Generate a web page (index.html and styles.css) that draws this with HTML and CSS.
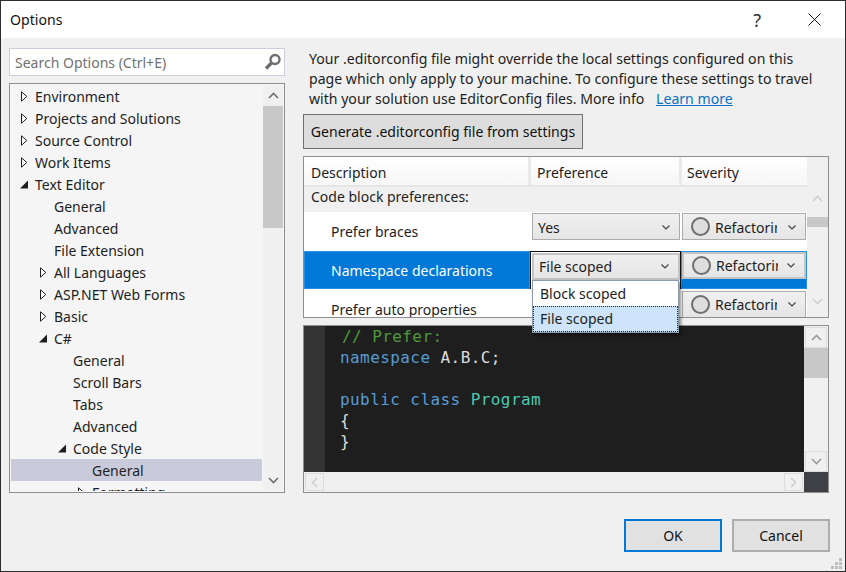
FILE: index.html
```html
<!DOCTYPE html>
<html lang="en">
<head>
<meta charset="utf-8">
<title>Options</title>
<link rel="stylesheet" href="styles.css">
</head>
<body>
<svg class="defs" width="0" height="0">
  <defs>
    <symbol id="open" viewBox="0 0 8 9"><path d="M0 8.5 8 8.5 8 .5Z" fill="#1e1e1e"/></symbol>
    <symbol id="closed" viewBox="0 0 8 11"><path d="M1.5 .8 6.8 5.5 1.5 10.2Z" fill="#fff" stroke="#1e1e1e"/></symbol>
    <symbol id="up" viewBox="0 0 11 7"><path d="M1 6 5.5 1.5 10 6" fill="none" stroke="currentColor" stroke-width="1.6"/></symbol>
    <symbol id="down" viewBox="0 0 11 7"><path d="M1 1 5.5 5.5 10 1" fill="none" stroke="currentColor" stroke-width="1.6"/></symbol>
    <symbol id="chev" viewBox="0 0 8 5"><path d="M.5 .5 4 4 7.5 .5" fill="none" stroke="#444" stroke-width="1.2"/></symbol>
  </defs>
</svg>
<div class="window">
  <header class="titlebar">
    <span class="title">Options</span>
    <span class="help">?</span>
    <svg class="close" width="13" height="13" viewBox="0 0 13 13"><path d="M.5 .5 12.5 12.5M12.5 .5 .5 12.5" stroke="#111" fill="none"/></svg>
  </header>
  <main class="main">
    <section class="left">
      <div class="search">
        <span class="search-text">Search Options (Ctrl+E)</span>
        <svg width="18" height="18" viewBox="0 0 18 18"><circle cx="11" cy="6.5" r="4.5" fill="none" stroke="#6f6f6f" stroke-width="2.4"/><path d="M7.5 10 2 15.5" stroke="#6f6f6f" stroke-width="3.4"/></svg>
      </div>
      <div class="tree">
        <div class="tree-list">
          <div class="node l0"><svg class="tw-c"><use href="#closed"/></svg><span>Environment</span></div>
          <div class="node l0"><svg class="tw-c"><use href="#closed"/></svg><span>Projects and Solutions</span></div>
          <div class="node l0"><svg class="tw-c"><use href="#closed"/></svg><span>Source Control</span></div>
          <div class="node l0"><svg class="tw-c"><use href="#closed"/></svg><span>Work Items</span></div>
          <div class="node l0"><svg class="tw-o"><use href="#open"/></svg><span>Text Editor</span></div>
          <div class="node l1 leaf"><span>General</span></div>
          <div class="node l1 leaf"><span>Advanced</span></div>
          <div class="node l1 leaf"><span>File Extension</span></div>
          <div class="node l1"><svg class="tw-c"><use href="#closed"/></svg><span>All Languages</span></div>
          <div class="node l1"><svg class="tw-c"><use href="#closed"/></svg><span>ASP.NET Web Forms</span></div>
          <div class="node l1"><svg class="tw-c"><use href="#closed"/></svg><span>Basic</span></div>
          <div class="node l1"><svg class="tw-o"><use href="#open"/></svg><span>C#</span></div>
          <div class="node l2 leaf"><span>General</span></div>
          <div class="node l2 leaf"><span>Scroll Bars</span></div>
          <div class="node l2 leaf"><span>Tabs</span></div>
          <div class="node l2 leaf"><span>Advanced</span></div>
          <div class="node l2"><svg class="tw-o"><use href="#open"/></svg><span>Code Style</span></div>
          <div class="node l3 leaf selected"><span>General</span></div>
          <div class="node l3"><svg class="tw-c"><use href="#closed"/></svg><span>Formatting</span></div>
        </div>
        <div class="tree-scroll">
          <div class="ts-btn"><svg width="11" height="7"><use href="#up"/></svg></div>
          <div class="ts-thumb"></div>
          <div class="ts-track"></div>
          <div class="ts-btn"><svg width="11" height="7"><use href="#down"/></svg></div>
        </div>
      </div>
    </section>
    <section class="right">
      <p class="info">Your .editorconfig file might override the local settings configured on this page which only apply to your machine. To configure these settings to travel with your solution use EditorConfig files. More info <a class="link" href="#">Learn more</a></p>
      <button class="gen">Generate .editorconfig file from settings</button>
      <div class="table">
        <div class="table-main">
          <div class="tr head">
            <div class="th">Description</div>
            <div class="th">Preference</div>
            <div class="th">Severity</div>
          </div>
          <div class="group">Code block preferences:</div>
          <div class="tr row">
            <div class="desc">Prefer braces</div>
            <div class="pref"><div class="combo"><span class="combo-text">Yes</span><svg width="8" height="5"><use href="#chev"/></svg></div></div>
            <div class="sev"><div class="combo sev-combo"><span class="radio"></span><span class="sev-text">Refactoring only</span><svg width="8" height="5"><use href="#chev"/></svg></div></div>
          </div>
          <div class="tr row active">
            <div class="desc">Namespace declarations</div>
            <div class="pref">
              <div class="combo"><span class="combo-text">File scoped</span><svg width="8" height="5"><use href="#chev"/></svg></div>
            </div>
            <div class="sev"><div class="combo sev-combo"><span class="radio"></span><span class="sev-text">Refactoring only</span><svg width="8" height="5"><use href="#chev"/></svg></div></div>
          </div>
          <div class="tr row last">
            <div class="desc">Prefer auto properties</div>
            <div class="pref"></div>
            <div class="sev"><div class="combo sev-combo"><span class="radio"></span><span class="sev-text">Refactoring only</span><svg width="8" height="5"><use href="#chev"/></svg></div></div>
          </div>
        </div>
        <div class="table-scroll">
          <svg width="11" height="7"><use href="#up"/></svg>
          <div class="tbl-thumb"></div>
          <svg width="11" height="7"><use href="#down"/></svg>
        </div>
      </div>
      <div class="dropdown">
        <div class="opt">Block scoped</div>
        <div class="opt current">File scoped</div>
      </div>
      <div class="editor">
        <div class="code-pane">
          <div class="gutter"></div>
          <pre class="code"><span class="comment">// Prefer:</span>
<span class="kw">namespace</span> A.B.C;

<span class="kw">public class</span> <span class="type">Program</span>
{
}</pre>
        </div>
        <div class="ed-v">
          <div class="ed-btn"><svg width="11" height="7"><use href="#up"/></svg></div>
          <div class="ed-thumb"></div>
          <div class="ed-track"></div>
          <div class="ed-btn"><svg width="11" height="7"><use href="#down"/></svg></div>
        </div>
        <div class="ed-h">
          <div class="ed-hbtn"><svg width="7" height="11" viewBox="0 0 7 11"><path d="M6 1 1.5 5.5 6 10" fill="none" stroke="#cfcfcf" stroke-width="1.6"/></svg></div>
          <div class="ed-hbtn"><svg width="7" height="11" viewBox="0 0 7 11"><path d="M1 1 5.5 5.5 1 10" fill="none" stroke="#cfcfcf" stroke-width="1.6"/></svg></div>
        </div>
        <div class="ed-corner"></div>
      </div>
    </section>
  </main>
  <footer class="footer">
    <button class="btn default">OK</button>
    <button class="btn">Cancel</button>
  </footer>
  <svg class="grip" width="12" height="12" viewBox="0 0 12 12"><path d="M8 0h3v3H8zM4 4h3v3H4zM8 4h3v3H8zM0 8h3v3H0zM4 8h3v3H4zM8 8h3v3H8z" fill="#bdbdbd"/></svg>
</div>
</body>
</html>
```
FILE: styles.css
```css
* { box-sizing: border-box; }
html, body { margin: 0; height: 100%; }
body { font-family: "Noto Sans", "Open Sans", sans-serif; font-size: 14px; color: #1e1e1e; overflow: hidden; }
.defs { position: absolute; }
.window { position: relative; width: 846px; height: 572px; border: 1px solid #2d2d2d; background: #f0f0f0; display: flex; flex-direction: column; }

.titlebar { height: 37px; background: #fff; display: flex; align-items: center; padding: 0 24px 0 9px; flex: none; }
.title { font-size: 14.1px; color: #111; flex: 1; }
.help { font-size: 18px; color: #333; margin-right: 47px; }

.main { display: flex; gap: 18px; padding: 10px 16px 0 8px; flex: none; height: 455px; }
.left { width: 276px; flex: none; display: flex; flex-direction: column; gap: 7px; }
.search { height: 28px; background: #fff; border: 1px solid #cccedb; display: flex; align-items: center; justify-content: space-between; padding: 0 2px 0 5px; }
.search-text { color: #717171; }
.tree { height: 410px; border: 1px solid #8e8f91; background: #f5f5f5; display: flex; overflow: hidden; padding: 1px; }
.tree-list { width: 251px; flex: none; overflow: hidden; }
.node { height: 22px; display: flex; align-items: center; white-space: nowrap; }
.node svg { flex: none; margin-right: 7px; }
.tw-c { width: 8px; height: 11px; }
.tw-o { width: 8px; height: 9px; }
.leaf span { margin-left: 15px; }
.l0 { padding-left: 9px; }
.l1 { padding-left: 28px; }
.l2 { padding-left: 47px; }
.l3 { padding-left: 66px; }
.selected { background: #cacbda; }
.tree-scroll { width: 20px; flex: none; margin-left: 1px; display: flex; flex-direction: column; color: #6f6f6f; background: #f0f0f0; }
.ts-btn { height: 21px; flex: none; display: flex; align-items: center; justify-content: center; }
.ts-thumb { height: 122px; flex: none; background: #c8c8c8; }
.ts-track { flex: 1; }

.right { width: 526px; flex: none; position: relative; display: flex; flex-direction: column; }
.info { margin: 0 0 5px; padding: 1px 6px 0; line-height: 20px; height: 61px; font-size: 14.1px; }
.link { color: #0e70c0; margin-left: 8px; }
.gen { align-self: flex-start; width: 280px; height: 35px; background: #dddddd; border: 1px solid #707070; font: inherit; font-size: 14.05px; color: #111; padding: 0; }

.table { margin-top: 7px; height: 162px; border: 1px solid #8e8f91; display: flex; background: #f0f0f0; overflow: hidden; flex: none; }
.table-main { width: 503px; flex: none; overflow: hidden; }
.tr { display: grid; grid-template-columns: 226px 151px 126px; }
.head { height: 30px; background: linear-gradient(#fff, #f6f6f6); border-bottom: 2px solid #e6e6e6; }
.th { padding: 6px 7px 0; line-height: 20px; border-right: 3px solid #e9e9e9; margin-right: -1px; }
.th:last-child { padding-left: 6px; border-right: 0; margin-right: 0; }
.group { height: 25px; line-height: 20px; padding: 0 7px; }
.row { height: 39px; background: #fff; }
.row + .row { height: 38px; }
.desc { padding-left: 27px; padding-top: 10px; line-height: 20px; }
.last .desc { padding-top: 11px; }
.pref { padding: 1px 1px 0 2px; }
.sev { padding: 1px 1px 0 1px; }
.combo { height: 27px; border: 1px solid #acacac; background: linear-gradient(#f0f0f0, #e5e5e5); display: flex; align-items: center; padding: 1px 9px 0 5px; }
.combo svg { flex: none; margin-left: auto; }
.combo-text { flex: 1; }
.radio { width: 19px; height: 19px; flex: none; border-radius: 50%; border: 2px solid #6f6f6f; background: #dedede; margin-left: 3px; margin-top: -1px; }
.sev-text { width: 62px; margin-left: 5px; overflow: hidden; white-space: nowrap; flex: none; }
.active { background: #fff; }
.active .desc { background: #0078d7; color: #fff; border: 1px solid #2a8fe0; padding-left: 26px; padding-top: 9px; }
.active .pref { border: 1px solid #111; border-bottom: 0; padding: 1px 0 0 1px; background: #fff; }
.active .sev { background: #0078d7; border: 1px solid #2a8fe0; padding: 0; }
.active .combo { border: 2px solid #c4c4c4; padding-top: 0; }
.last .sev { padding-top: 2px; }
.last .combo { padding-top: 0; }
.table-scroll { flex: 1; display: flex; flex-direction: column; align-items: center; color: #cfcfcf; padding-top: 38px; }
.tbl-thumb { width: 21px; height: 10px; background: #c8c8c8; margin: 15px 0 71px; }

.dropdown { position: absolute; left: 229px; top: 232px; width: 147px; height: 53px; background: #fff; border: 1px solid #8a9aa8; box-shadow: 2px 2px 3px rgba(0, 0, 0, .45); z-index: 2; }
.opt { height: 25px; line-height: 25px; padding-left: 7px; }
.current { height: 26px; padding-left: 6px; background: #cde4fb; border: 1px dotted #222; line-height: 23px; }

.editor { margin-top: 7px; height: 168px; border: 1px solid #8e8f91; display: grid; grid-template-columns: 500px 24px; grid-template-rows: 146px 20px; flex: none; }
.code-pane { background: #1e1e1e; display: flex; overflow: hidden; }
.gutter { width: 21px; background: #333; flex: none; }
.code { margin: 0; padding-left: 15px; font-family: "DejaVu Sans Mono", monospace; font-size: 16px; letter-spacing: .42px; line-height: 21px; color: #dcdcdc; }
.comment { color: #4e9a3c; margin-left: 2px; }
.kw { color: #569cd6; }
.type { color: #4ec9b0; }
.ed-v { display: flex; flex-direction: column; background: #f0f0f0; color: #9a9a9a; }
.ed-btn { height: 21px; flex: none; margin: 1px 1px 0; border: 1px solid #dcdcdc; display: flex; align-items: center; justify-content: center; }
.ed-thumb { height: 30px; background: #c8c8c8; flex: none; }
.ed-track { flex: 1; }
.ed-h { display: flex; justify-content: space-between; background: #f0f0f0; padding: 1px; }
.ed-hbtn { width: 19px; height: 18px; border: 1px solid #dcdcdc; display: flex; align-items: center; justify-content: center; }
.ed-corner { background: #3f3f46; }

.footer { display: flex; justify-content: flex-end; gap: 10px; padding: 26px 15px 0 0; }
.btn { width: 98px; height: 33px; background: #e1e1e1; border: 2px solid #adadad; font: inherit; color: #111; padding: 0; }
.default { border-color: #0078d7; }
.grip { position: absolute; right: 2px; bottom: 1px; }
```
